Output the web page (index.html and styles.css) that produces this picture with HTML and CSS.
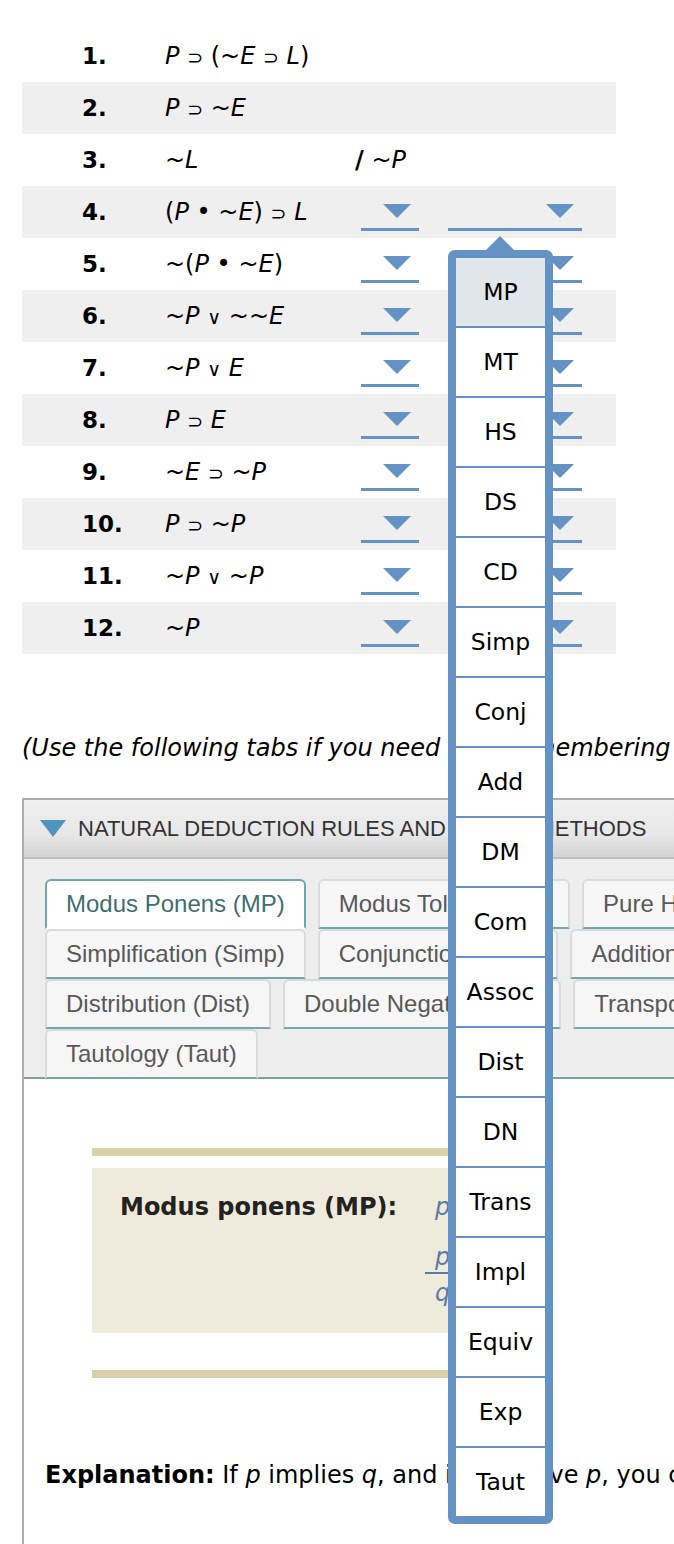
FILE: index.html
```html
<!DOCTYPE html>
<html lang="en">

<head>
    <meta charset="UTF-8">
    <meta name="viewport" content="width=device-width, initial-scale=1.0">
    <title>Proof</title>
    <link rel="stylesheet" href="styles.css">
</head>

<body>
    <div class="proof">
        <div class="line">
            <span class="num">1.</span>
            <span class="wff"><i>P</i> <span class="op">⊃</span> (~<i>E</i> <span class="op">⊃</span> <i>L</i>)</span>
        </div>
        <div class="line shade">
            <span class="num">2.</span>
            <span class="wff"><i>P</i> <span class="op">⊃</span> ~<i>E</i></span>
        </div>
        <div class="line">
            <span class="num">3.</span>
            <span class="wff">~<i>L</i></span>
            <span class="given"><b>/</b> ~<i>P</i></span>
        </div>
        <div class="line shade">
            <span class="num">4.</span>
            <span class="wff">(<i>P</i> • ~<i>E</i>) <span class="op">⊃</span> <i>L</i></span>
            <div class="pick small"><span class="arrow"></span></div>
            <div class="pick wide">
                <span class="arrow"></span>
                <ul class="menu">
                    <li class="current">MP</li>
                    <li>MT</li>
                    <li>HS</li>
                    <li>DS</li>
                    <li>CD</li>
                    <li>Simp</li>
                    <li>Conj</li>
                    <li>Add</li>
                    <li>DM</li>
                    <li>Com</li>
                    <li>Assoc</li>
                    <li>Dist</li>
                    <li>DN</li>
                    <li>Trans</li>
                    <li>Impl</li>
                    <li>Equiv</li>
                    <li>Exp</li>
                    <li>Taut</li>
                </ul>
            </div>
        </div>
        <div class="line">
            <span class="num">5.</span>
            <span class="wff">~(<i>P</i> • ~<i>E</i>)</span>
            <div class="pick small"><span class="arrow"></span></div>
            <div class="pick wide"><span class="arrow"></span></div>
        </div>
        <div class="line shade">
            <span class="num">6.</span>
            <span class="wff">~<i>P</i> <span class="op">∨</span> ~~<i>E</i></span>
            <div class="pick small"><span class="arrow"></span></div>
            <div class="pick wide"><span class="arrow"></span></div>
        </div>
        <div class="line">
            <span class="num">7.</span>
            <span class="wff">~<i>P</i> <span class="op">∨</span> <i>E</i></span>
            <div class="pick small"><span class="arrow"></span></div>
            <div class="pick wide"><span class="arrow"></span></div>
        </div>
        <div class="line shade">
            <span class="num">8.</span>
            <span class="wff"><i>P</i> <span class="op">⊃</span> <i>E</i></span>
            <div class="pick small"><span class="arrow"></span></div>
            <div class="pick wide"><span class="arrow"></span></div>
        </div>
        <div class="line">
            <span class="num">9.</span>
            <span class="wff">~<i>E</i> <span class="op">⊃</span> ~<i>P</i></span>
            <div class="pick small"><span class="arrow"></span></div>
            <div class="pick wide"><span class="arrow"></span></div>
        </div>
        <div class="line shade">
            <span class="num">10.</span>
            <span class="wff"><i>P</i> <span class="op">⊃</span> ~<i>P</i></span>
            <div class="pick small"><span class="arrow"></span></div>
            <div class="pick wide"><span class="arrow"></span></div>
        </div>
        <div class="line">
            <span class="num">11.</span>
            <span class="wff">~<i>P</i> <span class="op">∨</span> ~<i>P</i></span>
            <div class="pick small"><span class="arrow"></span></div>
            <div class="pick wide"><span class="arrow"></span></div>
        </div>
        <div class="line shade">
            <span class="num">12.</span>
            <span class="wff">~<i>P</i></span>
            <div class="pick small"><span class="arrow"></span></div>
            <div class="pick wide"><span class="arrow"></span></div>
        </div>
    </div>

    <p class="note">(Use the following tabs if you need help remembering the rules.)</p>

    <div class="panel">
        <div class="panel-head"><span class="caret"></span>NATURAL DEDUCTION RULES AND PROOF METHODS</div>
        <div class="tabs">
            <div class="tab-row">
                <span class="tab active">Modus Ponens (MP)</span>
                <span class="tab">Modus Tollens (MT)</span>
                <span class="tab">Pure Hypothetical Syllogism (HS)</span>
                <span class="tab">Disjunctive Syllogism (DS)</span>
            </div>
            <div class="tab-row">
                <span class="tab">Simplification (Simp)</span>
                <span class="tab">Conjunction (Conj)</span>
                <span class="tab">Addition (Add)</span>
                <span class="tab">De Morgan's Rule (DM)</span>
            </div>
            <div class="tab-row">
                <span class="tab">Distribution (Dist)</span>
                <span class="tab">Double Negation (DN)</span>
                <span class="tab">Transposition (Trans)</span>
                <span class="tab">Material Implication (Impl)</span>
            </div>
            <div class="tab-row">
                <span class="tab">Tautology (Taut)</span>
            </div>
        </div>
        <div class="panel-body">
            <div class="rule-card">
                <div class="rule">
                    <b class="rule-name">Modus ponens (MP):</b>
                    <div class="argument">
                        <div><i>p</i> ⊃ <i>q</i></div>
                        <div class="premise"><i>p</i></div>
                        <div><i>q</i></div>
                    </div>
                </div>
            </div>
            <p class="explain"><b>Explanation:</b> If <i>p</i> implies <i>q</i>, and if you have <i>p</i>, you can infer <i>q</i>.</p>
        </div>
    </div>
</body>

</html>
```

FILE: styles.css
```css
* {
    margin: 0;
    padding: 0;
    box-sizing: border-box;
}

body {
    font-family: "DejaVu Sans", Verdana, sans-serif;
    color: #000;
    overflow-x: hidden;
}

/* proof lines */
.proof {
    width: 594px;
    margin: 30px 0 0 22px;
    font-size: 24px;
}

.line {
    display: flex;
    align-items: center;
    height: 52px;
}

.line.shade {
    background-color: #efefef;
}

.num {
    width: 143px;
    padding-left: 60px;
    font-size: 23px;
    font-weight: bold;
}

.wff {
    width: 190px;
    white-space: nowrap;
}

.op {
    font-size: 19px;
}

.given {
    white-space: nowrap;
}

.pick {
    position: relative;
    display: flex;
    justify-content: flex-end;
    align-self: flex-start;
    height: 27px;
    margin-top: 18px;
    padding-right: 8px;
    border-bottom: 3px solid #6492c4;
}

.pick.small {
    width: 58px;
    margin-left: 6px;
    margin-right: 29px;
}

.pick.wide {
    width: 134px;
}

.arrow {
    width: 0;
    height: 0;
    border-left: 14px solid transparent;
    border-right: 14px solid transparent;
    border-top: 14px solid #6492c4;
}

/* open dropdown */
.menu {
    position: absolute;
    top: 46px;
    left: 0;
    z-index: 10;
    width: 105px;
    list-style: none;
    border: 8px solid #6492c4;
    border-radius: 7px;
    background-color: #fff;
    font-size: 23.5px;
    text-align: center;
}

.menu::before {
    content: "";
    position: absolute;
    top: -22px;
    left: 30px;
    border-left: 14px solid transparent;
    border-right: 14px solid transparent;
    border-bottom: 14px solid #6492c4;
}

.menu li {
    height: 70px;
    line-height: 68px;
    border-top: 2px solid #6492c4;
}

.menu li.current {
    height: 68px;
    border-top: none;
    background-color: #e0e7ea;
}

.note {
    margin: 80px 0 0 22px;
    font-size: 24px;
    font-style: italic;
    line-height: 28px;
    white-space: nowrap;
}

/* rules panel */
.panel {
    width: 1100px;
    margin: 36px 0 0 22px;
    border-left: 2px solid #adadad;
    border-top: 2px solid #adadad;
}

.panel-head {
    display: flex;
    align-items: center;
    gap: 12px;
    height: 59px;
    padding-left: 16px;
    border-bottom: 2px solid #bdbdbd;
    background: linear-gradient(#f0f0f0, #e7e7e7 60%, #d3d3d3);
    font-family: "Liberation Sans", Arial, sans-serif;
    font-size: 22px;
    color: #333;
}

.caret {
    border-left: 13px solid transparent;
    border-right: 13px solid transparent;
    border-top: 17px solid #5194bf;
}

.tabs {
    padding: 20px 0 0 21px;
    background-color: #ededed;
    border-bottom: 2px solid #72a7a6;
    font-family: "Liberation Sans", Arial, sans-serif;
    font-size: 24px;
}

.tab-row {
    display: flex;
    gap: 12px;
}

.tab-row:last-child {
    margin-bottom: -2px;
}

.tab {
    flex-shrink: 0;
    height: 50px;
    padding: 0 19px;
    line-height: 46px;
    border: 2px solid #dadada;
    border-bottom-color: #72a7a6;
    border-radius: 6px 6px 0 0;
    background-color: #f6f6f6;
    color: #585858;
    white-space: nowrap;
}

.tab.active {
    background-color: #fff;
    border-color: #72a7a6;
    border-bottom-color: #fff;
    color: #3e6e6f;
}

.panel-body {
    padding: 69px 0 80px 21px;
    background-color: #fff;
}

.rule-card {
    width: 410px;
    margin-left: 47px;
    padding: 12px 0 37px;
    border-top: 8px solid #d9cfa9;
    border-bottom: 8px solid #d9cfa9;
}

.rule {
    display: flex;
    height: 165px;
    padding: 24px 0 0 28px;
    background-color: #eeebdc;
    font-size: 24px;
    line-height: 30px;
}

.rule-name {
    width: 305px;
    color: #222;
}

.argument {
    flex: 1;
    color: #5a7ba6;
}

.argument div {
    padding-left: 10px;
}

.argument .premise {
    margin: 20px 0 4px;
    border-bottom: 2px solid #5a7ba6;
}

.explain {
    margin-top: 80px;
    font-size: 24px;
    line-height: 34px;
    white-space: nowrap;
}
```
